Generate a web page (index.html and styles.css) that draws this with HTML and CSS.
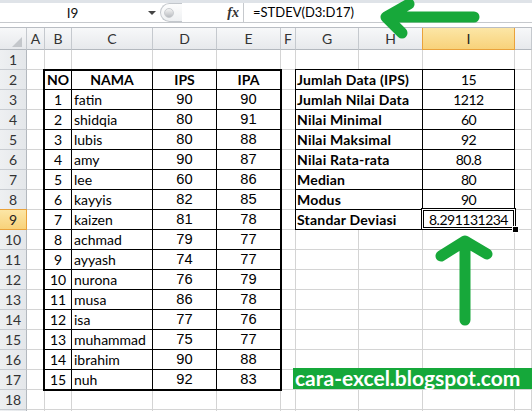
FILE: index.html
```html
<!DOCTYPE html>
<html>
<head>
<meta charset="utf-8">
<link rel="stylesheet" href="styles.css">
</head>
<body>
<div class="app">
  <div class="topbar">
    <div class="namebox"><span class="ref">I9</span><span class="dd"></span></div>
    <div class="splitter"><span class="knob"></span></div>
    <div class="fxarea"><span class="fx">fx</span></div>
    <div class="formula">=STDEV(D3:D17)</div>
  </div>
  <div class="band"></div>
  <div class="sheet">
    <div class="h corner"><span class="tri"></span></div>
    <div class="h">A</div><div class="h">B</div><div class="h">C</div><div class="h">D</div><div class="h">E</div><div class="h">F</div><div class="h">G</div><div class="h">H</div><div class="h sel selc">I</div><div class="h"></div>

    <div class="t1">
      <div class="hd">NO</div><div class="hd">NAMA</div><div class="hd">IPS</div><div class="hd">IPA</div>
      <div class="no">1</div><div class="nm">fatin</div><div class="num">90</div><div class="num">90</div>
      <div class="no">2</div><div class="nm">shidqia</div><div class="num">80</div><div class="num">91</div>
      <div class="no">3</div><div class="nm">lubis</div><div class="num">80</div><div class="num">88</div>
      <div class="no">4</div><div class="nm">amy</div><div class="num">90</div><div class="num">87</div>
      <div class="no">5</div><div class="nm">lee</div><div class="num">60</div><div class="num">86</div>
      <div class="no">6</div><div class="nm">kayyis</div><div class="num">82</div><div class="num">85</div>
      <div class="no">7</div><div class="nm">kaizen</div><div class="num">81</div><div class="num">78</div>
      <div class="no">8</div><div class="nm">achmad</div><div class="num">79</div><div class="num">77</div>
      <div class="no">9</div><div class="nm">ayyash</div><div class="num">74</div><div class="num">77</div>
      <div class="no">10</div><div class="nm">nurona</div><div class="num">76</div><div class="num">79</div>
      <div class="no">11</div><div class="nm">musa</div><div class="num">86</div><div class="num">78</div>
      <div class="no">12</div><div class="nm">isa</div><div class="num">77</div><div class="num">76</div>
      <div class="no">13</div><div class="nm">muhammad</div><div class="num">75</div><div class="num">77</div>
      <div class="no">14</div><div class="nm">ibrahim</div><div class="num">90</div><div class="num">88</div>
      <div class="no">15</div><div class="nm">nuh</div><div class="num">92</div><div class="num">83</div>
    </div>

    <div class="t2">
      <div class="lb">Jumlah Data (IPS)</div><div class="val">15</div>
      <div class="lb">Jumlah Nilai Data</div><div class="val">1212</div>
      <div class="lb">Nilai Minimal</div><div class="val">60</div>
      <div class="lb">Nilai Maksimal</div><div class="val">92</div>
      <div class="lb">Nilai Rata-rata</div><div class="val">80.8</div>
      <div class="lb">Median</div><div class="val">80</div>
      <div class="lb">Modus</div><div class="val">90</div>
      <div class="lb">Standar Deviasi</div><div class="val">8.291131234</div>
    </div>

    <div class="r">1</div><div class="c"></div><div class="c"></div><div class="c"></div><div class="c"></div><div class="c"></div><div class="c"></div><div class="c"></div><div class="c"></div><div class="c"></div><div class="c"></div>
    <div class="r">2</div><div class="c"></div><div class="c"></div><div class="c"></div>
    <div class="r">3</div><div class="c"></div><div class="c"></div><div class="c"></div>
    <div class="r">4</div><div class="c"></div><div class="c"></div><div class="c"></div>
    <div class="r">5</div><div class="c"></div><div class="c"></div><div class="c"></div>
    <div class="r">6</div><div class="c"></div><div class="c"></div><div class="c"></div>
    <div class="r">7</div><div class="c"></div><div class="c"></div><div class="c"></div>
    <div class="r">8</div><div class="c"></div><div class="c"></div><div class="c"></div>
    <div class="r sel selr">9</div><div class="c"></div><div class="c"></div><div class="c"></div>
    <div class="r">10</div><div class="c"></div><div class="c"></div><div class="c"></div><div class="c"></div><div class="c"></div><div class="c"></div>
    <div class="r">11</div><div class="c"></div><div class="c"></div><div class="c"></div><div class="c"></div><div class="c"></div><div class="c"></div>
    <div class="r">12</div><div class="c"></div><div class="c"></div><div class="c"></div><div class="c"></div><div class="c"></div><div class="c"></div>
    <div class="r">13</div><div class="c"></div><div class="c"></div><div class="c"></div><div class="c"></div><div class="c"></div><div class="c"></div>
    <div class="r">14</div><div class="c"></div><div class="c"></div><div class="c"></div><div class="c"></div><div class="c"></div><div class="c"></div>
    <div class="r">15</div><div class="c"></div><div class="c"></div><div class="c"></div><div class="c"></div><div class="c"></div><div class="c"></div>
    <div class="r">16</div><div class="c"></div><div class="c"></div><div class="c"></div><div class="c"></div><div class="c"></div><div class="c"></div>
    <div class="r">17</div><div class="c"></div><div class="c"></div><div class="c"></div><div class="c"></div><div class="c"></div><div class="c"></div>
    <div class="r">18</div><div class="c"></div><div class="c"></div><div class="c"></div><div class="c"></div><div class="c"></div><div class="c"></div><div class="c"></div><div class="c"></div><div class="c"></div><div class="c"></div>
    <div class="r"></div><div class="c"></div><div class="c"></div><div class="c"></div><div class="c"></div><div class="c"></div><div class="c"></div><div class="c"></div><div class="c"></div><div class="c"></div><div class="c"></div>
  </div>

  <div class="selbox"><span class="handle"></span></div>
  <div class="watermark">cara-excel.blogspot.com</div>
  <svg class="arrows" width="532" height="411" viewBox="0 0 532 411">
    <g fill="none" stroke="#17a83a" stroke-width="11" stroke-linecap="round" stroke-linejoin="round">
      <path d="M474 17 L387 17 M409 4 L386 17 L402 33"/>
      <path d="M465 320 L465 242 M441 256 L465 241 L487 254"/>
    </g>
  </svg>
</div>
</body>
</html>
```

FILE: styles.css
```css
* { box-sizing: border-box; }
body {
  margin: 0;
  width: 532px;
  height: 411px;
  overflow: hidden;
  background: #fff;
  font-family: Lato, "Liberation Sans", sans-serif;
  color: #000;
}
.app {
  position: relative;
  width: 532px;
  height: 411px;
  overflow: hidden;
}

/* formula bar */
.topbar {
  display: flex;
  height: 23px;
  border-top: 3px solid #dfe3e8;
  border-bottom: 1px solid #c6c9cd;
  background: #fff;
}
.namebox {
  width: 158px;
  display: flex;
  align-items: center;
}
.ref {
  width: 145px;
  text-align: center;
  font-size: 13.5px;
  color: #111;
}
.dd {
  width: 0;
  height: 0;
  margin-left: 3px;
  border-left: 4px solid transparent;
  border-right: 4px solid transparent;
  border-top: 4px solid #444;
}
.splitter {
  width: 22px;
  margin-left: 2px;
  border: 1px solid #c3c7cc;
  border-right: none;
  border-radius: 10px 0 0 10px;
  display: flex;
  align-items: center;
  padding-left: 3px;
  background: linear-gradient(#fdfdfd, #eef0f2);
}
.knob {
  width: 10px;
  height: 10px;
  border-radius: 50%;
  background: linear-gradient(#f4f4f4, #b9bcc0);
  border: 1px solid #c9ccd0;
}
.fxarea {
  flex: 1;
  display: flex;
  align-items: center;
  justify-content: flex-end;
  padding-right: 4px;
}
.fx {
  font-family: "Liberation Serif", serif;
  font-style: italic;
  font-weight: bold;
  font-size: 14px;
  color: #333;
}
.formula {
  width: 289px;
  border-left: 1px solid #c6c9cd;
  padding-left: 9px;
  font-size: 13px;
  line-height: 19px;
  color: #000;
}
.band {
  height: 5px;
  background: #fff;
  border-bottom: 1px solid #b9bdc3;
}

/* sheet grid */
.sheet {
  display: grid;
  grid-template-columns: 27px 18px 27px 81px 64px 64px 15px 63px 64px 92px 1fr;
  grid-template-rows: 22px repeat(19, 20px);
  font-size: 14px;
}
.c {
  border-right: 1px solid #d4d4d4;
  border-bottom: 1px solid #d4d4d4;
}
.h {
  background: linear-gradient(#f7f8f9, #e7e9ec);
  border-right: 1px solid #c5c9ce;
  border-bottom: 1px solid #b3b8be;
  text-align: center;
  line-height: 21px;
  color: #333;
}
.corner {
  display: flex;
  align-items: flex-end;
  justify-content: flex-end;
  padding: 0 4px 2px 0;
}
.tri {
  width: 0;
  height: 0;
  border-left: 10px solid transparent;
  border-bottom: 10px solid #c4c7cb;
}
.r {
  background: linear-gradient(90deg, #eef0f2, #e4e7ea);
  border-right: 1px solid #b3b8be;
  border-bottom: 1px solid #c8ccd1;
  text-align: center;
  line-height: 19px;
  color: #333;
}
.sel {
  background: linear-gradient(#fce6a6, #f8d27a);
  border-color: #e9a23b;
  color: #222;
}
.selc { box-shadow: -1px 0 0 #e9a23b; }
.selr { box-shadow: 0 -1px 0 #e9a23b; }

/* table 1 */
.t1 {
  grid-column: 3 / 7;
  grid-row: 3 / 19;
  margin: -1px -1px -1px -2px;
  border: 2px solid #000;
  border-bottom-width: 1px;
  display: grid;
  grid-template-columns: 27px 81px 64px 1fr;
  grid-template-rows: 19px repeat(15, 20px);
  background: #fff;
  position: relative;
  z-index: 1;
}
.t1 > div {
  border-right: 1px solid #000;
  border-bottom: 1px solid #000;
  line-height: 19px;
  white-space: nowrap;
}
.t1 > div:nth-child(4n) { border-right: none; }
.t1 > div:nth-child(-n+4) { line-height: 18px; }
.hd {
  font-weight: bold;
  text-align: center;
}
.no { text-align: center; }
.nm { padding-left: 2px; }
.num {
  text-align: center;
  font-family: "Liberation Sans", Arial, sans-serif;
  font-size: 14.7px;
}

/* table 2 */
.t2 {
  grid-column: 8 / 11;
  grid-row: 3 / 11;
  margin: -1px 0 0 -1px;
  border: 1px solid #000;
  border-bottom: none;
  display: grid;
  grid-template-columns: 127px 1fr;
  grid-template-rows: repeat(8, 20px);
  background: #fff;
  position: relative;
  z-index: 1;
}
.t2 > div {
  border-bottom: 1px solid #000;
  line-height: 19px;
  white-space: nowrap;
}
.lb {
  border-right: 1px solid #000;
  font-weight: bold;
  padding-left: 1px;
  letter-spacing: 0.2px;
}
.val {
  text-align: center;
  letter-spacing: -0.5px;
}

/* overlays */
.selbox {
  position: absolute;
  left: 421px;
  top: 208px;
  width: 95px;
  height: 22px;
  border: 1px solid #000;
  box-shadow: inset 0 0 0 1px #fff, inset 0 0 0 2px #000;
  z-index: 2;
}
.handle {
  position: absolute;
  right: -4px;
  bottom: -4px;
  width: 7px;
  height: 7px;
  background: #000;
  border: 1px solid #fff;
}
.watermark {
  position: absolute;
  left: 293px;
  top: 368px;
  width: 239px;
  height: 21px;
  background: #15a83a;
  color: #fff;
  font-family: Lato, "Liberation Sans", sans-serif;
  font-weight: bold;
  font-size: 21px;
  line-height: 20px;
  padding-left: 2px;
  white-space: nowrap;
  z-index: 3;
}
.arrows {
  position: absolute;
  left: 0;
  top: 0;
  z-index: 4;
  pointer-events: none;
}
```
